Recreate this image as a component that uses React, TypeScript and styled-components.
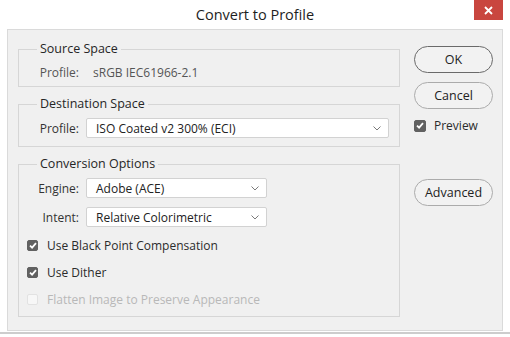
import React from 'react'
import styled, { createGlobalStyle } from 'styled-components'

const GlobalStyle = createGlobalStyle`
  html, body {
    margin: 0;
    padding: 0;
    background: #ffffff;
    font-family: "Open Sans", "Noto Sans", sans-serif;
    font-size: 12px;
    color: #2b2b2b;
  }
`

type Row = { label: string; value: string }

const Chevron = () => (
  <svg width="8" height="5" viewBox="0 0 8 5">
    <path d="M0.5 0.5 L4 4 L7.5 0.5" fill="none" stroke="#7a7a7a" strokeWidth="1" />
  </svg>
)

const Check = ({ checked, disabled, size }: { checked?: boolean; disabled?: boolean; size?: number }) => (
  <CheckBox checked={checked} disabled={disabled} size={size}>
    {checked && (
      <svg width="8" height="7" viewBox="0 0 8 7">
        <path d="M1 3.6 L3.1 5.6 L7 1.2" fill="none" stroke="#ffffff" strokeWidth="1.8" />
      </svg>
    )}
  </CheckBox>
)

const Select = ({ value, width }: { value: string; width: number }) => (
  <SelectBox width={width}>
    <span>{value}</span>
    <Chevron />
  </SelectBox>
)

const App = () => {
  const intentRows: Row[] = [
    { label: 'Engine:', value: 'Adobe (ACE)' },
    { label: 'Intent:', value: 'Relative Colorimetric' },
  ]
  return (
    <Window>
      <GlobalStyle />
      <TitleBar>
        <span />
        <Title>Convert to Profile</Title>
        <CloseButton>
          <svg width="9" height="9" viewBox="0 0 9 9">
            <path d="M1 1 L8 8 M8 1 L1 8" stroke="#ffffff" strokeWidth="1.8" />
          </svg>
        </CloseButton>
      </TitleBar>

      <Panel>
        <Groups>
          <Group>
            <Legend>Source Space</Legend>
            <GroupBody pad="4px 0 4px 0">
              <FieldRow>
                <Label muted>Profile:</Label>
                <Value>sRGB IEC61966-2.1</Value>
              </FieldRow>
            </GroupBody>
          </Group>

          <Group>
            <Legend>Destination Space</Legend>
            <GroupBody pad="5px 0 8px 0">
              <FieldRow>
                <Label>Profile:</Label>
                <Select value="ISO Coated v2 300% (ECI)" width={303} />
              </FieldRow>
            </GroupBody>
          </Group>

          <Group>
            <Legend>Conversion Options</Legend>
            <GroupBody pad="5px 0 7px 0">
              <Stack gap={9}>
                {intentRows.map((r) => (
                  <FieldRow key={r.label}>
                    <Label>{r.label}</Label>
                    <Select value={r.value} width={181} />
                  </FieldRow>
                ))}
              </Stack>
              <CheckList>
                <CheckRow>
                  <Check checked />
                  <span>Use Black Point Compensation</span>
                </CheckRow>
                <CheckRow>
                  <Check checked />
                  <span>Use Dither</span>
                </CheckRow>
                <CheckRow disabled>
                  <Check disabled />
                  <span>Flatten Image to Preserve Appearance</span>
                </CheckRow>
              </CheckList>
            </GroupBody>
          </Group>
        </Groups>

        <Side>
          <Button primary>OK</Button>
          <Button>Cancel</Button>
          <PreviewRow>
            <Check checked size={12} />
            <span>Preview</span>
          </PreviewRow>
          <Button spaced>Advanced</Button>
        </Side>
      </Panel>
      <BottomEdge />
    </Window>
  )
}

export default App

//Styled Components
const Window = styled.div`
  width: 510px;
  height: 337px;
  overflow: hidden;
  background: #ffffff;
`
const TitleBar = styled.div`
  display: grid;
  grid-template-columns: 1fr auto 1fr;
  align-items: start;
  height: 29px;
`
const Title = styled.div`
  font-size: 14.5px;
  color: #1e1e1e;
  padding-top: 5px;
  line-height: 20px;
`
const CloseButton = styled.div`
  justify-self: end;
  margin-right: 7px;
  width: 29px;
  height: 20px;
  background: #c9463f;
  display: flex;
  align-items: center;
  justify-content: center;
`
const Panel = styled.div`
  margin: 0 7px;
  height: 302px;
  box-sizing: border-box;
  border: 1px solid #dadada;
  background: #f0f0f0;
  display: flex;
  align-items: flex-start;
  padding: 10px 0 0 10px;
`
const Groups = styled.div`
  display: flex;
  flex-direction: column;
  gap: 8px;
  width: 382px;
`
const Group = styled.fieldset`
  margin: 0;
  padding: 0 0 0 8px;
  border: 1px solid #d6d6d6;
  min-width: 0;
`
const Legend = styled.legend`
  margin-left: 10px;
  padding: 0 3px;
  font-size: 12.5px;
  line-height: 18px;
  color: #262626;
`
const GroupBody = styled.div<{ pad: string }>`
  padding: ${(p) => p.pad};
  margin-left: -8px;
`
const Stack = styled.div<{ gap: number }>`
  display: flex;
  flex-direction: column;
  gap: ${(p) => p.gap}px;
`
const FieldRow = styled.div`
  display: flex;
  align-items: center;
  height: 20px;
`
const Label = styled.div<{ muted?: boolean }>`
  width: 60px;
  text-align: right;
  color: ${(p) => (p.muted ? '#555555' : '#333333')};
`
const Value = styled.div`
  margin-left: 14px;
  color: #555555;
`
const SelectBox = styled.div<{ width: number }>`
  margin-left: 7px;
  width: ${(p) => p.width}px;
  height: 20px;
  box-sizing: border-box;
  background: #ffffff;
  border: 1px solid #d2d2d2;
  border-radius: 2px;
  display: flex;
  align-items: center;
  justify-content: space-between;
  padding: 0 7px 0 9px;
  color: #222222;
`
const CheckList = styled.div`
  display: flex;
  flex-direction: column;
  gap: 7px;
  margin-top: 8px;
  padding-left: 8px;
`
const CheckRow = styled.div<{ disabled?: boolean }>`
  display: flex;
  align-items: center;
  gap: 9px;
  height: 20px;
  color: ${(p) => (p.disabled ? '#b8b8b8' : '#2b2b2b')};
`
const CheckBox = styled.div<{ checked?: boolean; disabled?: boolean; size?: number }>`
  width: ${(p) => p.size || 11}px;
  height: ${(p) => p.size || 11}px;
  border-radius: 2px;
  box-sizing: border-box;
  display: flex;
  align-items: center;
  justify-content: center;
  background: ${(p) => (p.checked ? '#616161' : '#f7f7f7')};
  border: 1px solid ${(p) => (p.checked ? '#616161' : p.disabled ? '#e2e2e2' : '#9a9a9a')};
`
const Side = styled.div`
  display: flex;
  flex-direction: column;
  margin-left: 14px;
  margin-top: -2px;
  padding-top: 8px;
`
const Button = styled.div<{ primary?: boolean; spaced?: boolean }>`
  width: 79px;
  height: 27px;
  box-sizing: border-box;
  border-radius: 14px;
  border: 1px solid ${(p) => (p.primary ? '#6a6a6a' : '#ababab')};
  background: #f2f2f2;
  display: flex;
  align-items: center;
  justify-content: center;
  font-size: 12.5px;
  color: #222222;
  margin-bottom: ${(p) => (p.primary ? '9px' : '0')};
  margin-top: ${(p) => (p.spaced ? '47px' : '0')};
`
const PreviewRow = styled.div`
  display: flex;
  align-items: center;
  gap: 8px;
  margin-top: 10px;
  height: 13px;
  color: #2b2b2b;
`
const BottomEdge = styled.div`
  margin: 1px 0 0 0;
  height: 2px;
  background: #cdcdcd;
`
